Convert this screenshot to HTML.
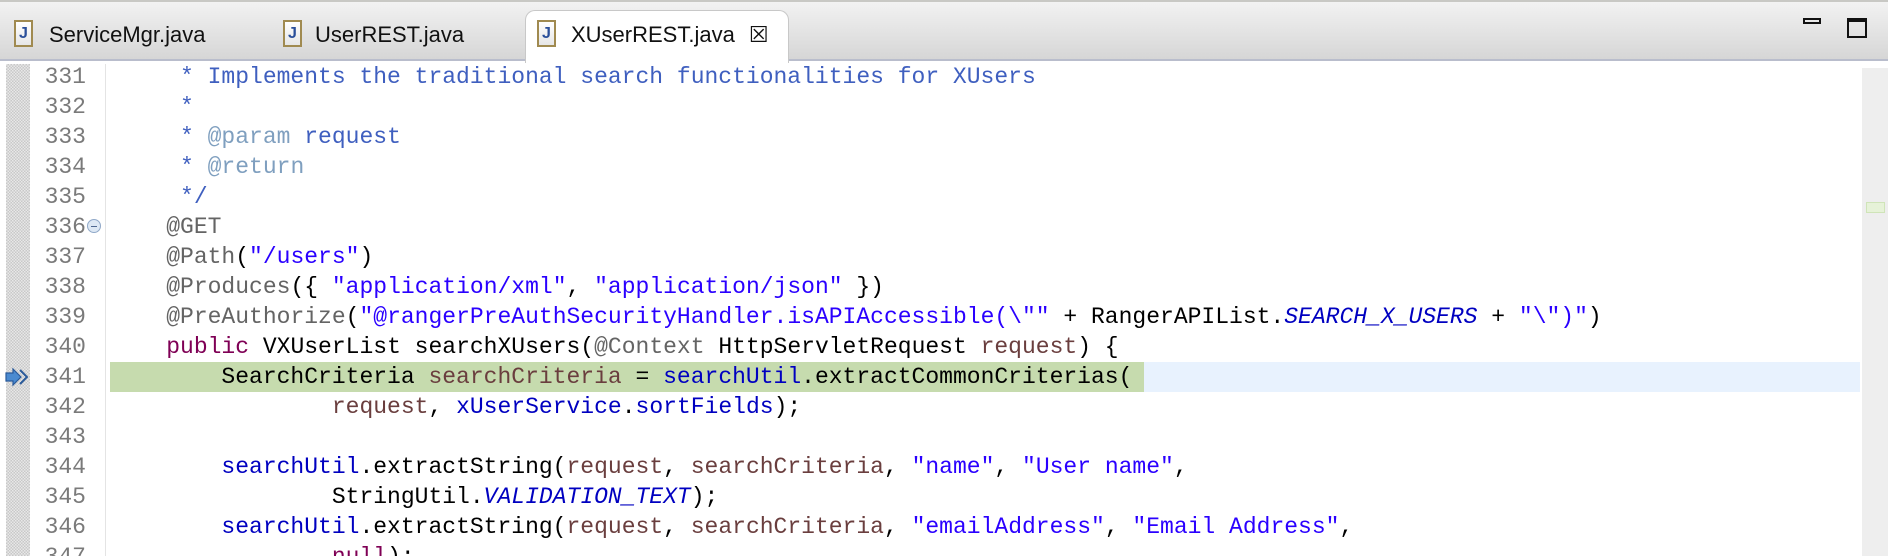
<!DOCTYPE html>
<html><head><meta charset="utf-8"><style>
html,body{margin:0;padding:0;background:#fff;width:1888px;height:556px;overflow:hidden;position:relative;font-family:"Liberation Sans",sans-serif}
.tabbar{position:absolute;left:0;top:0;width:1888px;height:61px;background:linear-gradient(#f2f2f2,#d6d6d6);border-top:2px solid #c8c8c4;box-sizing:border-box;border-bottom:2px solid #b9bdcc}
.tab{position:absolute;top:12px;height:49px;font-size:22px;color:#111;line-height:46px}
.tab .ic{position:absolute;left:0;top:8px;width:19px;height:27px;border:2px solid #a08a50;background:linear-gradient(#fff,#e6e6e6);box-sizing:border-box;font:bold 16px "Liberation Sans",sans-serif;color:#2a4f9a;text-align:center;line-height:23px}
.active{position:absolute;left:525px;top:10px;width:264px;height:53px;background:#fff;border:1px solid #c8c8c8;border-bottom:none;border-radius:10px 10px 0 0;box-sizing:border-box}
.code{position:absolute;left:0;top:62px;width:1888px}
.ln{position:absolute;left:0;width:86px;text-align:right;font:23px/30px "Liberation Mono",monospace;color:#7a7a7a}
.l{position:absolute;left:111px;white-space:pre;font:23px/30px "Liberation Mono",monospace;color:#000}
.c{color:#3F5FBF}.t{color:#7F9FBF}.a{color:#646464}.s{color:#2A00FF}.k{color:#7F0055}.f{color:#0000C0}.v{color:#6A3E3E}.i{color:#0000C0;font-style:italic}
</style></head><body>
<div class="tabbar"></div>
<div class="active"></div>
<div class="tab" style="left:14px"><span class="ic">J</span><span style="margin-left:35px">ServiceMgr.java</span></div>
<div class="tab" style="left:283px"><span class="ic">J</span><span style="margin-left:32px">UserREST.java</span></div>
<div class="tab" style="left:537px"><span class="ic">J</span><span style="margin-left:34px">XUserREST.java</span><span style="margin-left:14px;font-size:22px">&#x2612;</span></div>
<div style="position:absolute;left:1803px;top:18px;width:18px;height:6px;border:2px solid #111;box-sizing:border-box"></div>
<div style="position:absolute;left:1847px;top:18px;width:20px;height:20px;border:2px solid #111;border-top-width:4px;box-sizing:border-box"></div>
<div style="position:absolute;left:6px;top:64px;width:24px;height:492px;background:repeating-conic-gradient(#c8c8c8 0 25%,#e8e8e8 0 50%) 0 0/3px 3px"></div>
<div style="position:absolute;left:105px;top:64px;width:1px;height:492px;background:#e4e4e4"></div>
<div style="position:absolute;left:1862px;top:68px;width:26px;height:488px;background:#eeeeee"></div>
<div style="position:absolute;left:1866px;top:202px;width:17px;height:9px;background:#e6f2d8;border:1px solid #cfe4b8"></div>
<div style="position:absolute;left:110px;top:362px;width:1034px;height:30px;background:#c6dbae"></div>
<div style="position:absolute;left:1144px;top:362px;width:716px;height:30px;background:#e8f2fe"></div>
<div style="position:absolute;left:87px;top:219px;width:14px;height:14px;border:1px solid #90a8c8;border-radius:50%;background:#dde8f4;box-sizing:border-box"><div style="position:absolute;left:3px;top:5.5px;width:6px;height:1.5px;background:#506890"></div></div>
<svg style="position:absolute;left:4px;top:366px" width="24" height="22" viewBox="0 0 24 22"><path d="M2 7h7V3l8 8-8 8v-4H2z" fill="#4a8ad0" stroke="#2a5a9a" stroke-width="1.2"/><path d="M16 4l7 7-7 7" fill="none" stroke="#2a5a9a" stroke-width="2"/></svg>
<div class="code">
<div class="ln" style="top:0">331</div><div class="l c" style="top:0">     * Implements the traditional search functionalities for XUsers</div>
<div class="ln" style="top:30px">332</div><div class="l c" style="top:30px">     *</div>
<div class="ln" style="top:60px">333</div><div class="l c" style="top:60px">     * <span class="t">@param</span> request</div>
<div class="ln" style="top:90px">334</div><div class="l c" style="top:90px">     * <span class="t">@return</span></div>
<div class="ln" style="top:120px">335</div><div class="l c" style="top:120px">     */</div>
<div class="ln" style="top:150px">336</div><div class="l a" style="top:150px">    @GET</div>
<div class="ln" style="top:180px">337</div><div class="l" style="top:180px">    <span class="a">@Path</span>(<span class="s">"/users"</span>)</div>
<div class="ln" style="top:210px">338</div><div class="l" style="top:210px">    <span class="a">@Produces</span>({ <span class="s">"application/xml"</span>, <span class="s">"application/json"</span> })</div>
<div class="ln" style="top:240px">339</div><div class="l" style="top:240px">    <span class="a">@PreAuthorize</span>(<span class="s">"@rangerPreAuthSecurityHandler.isAPIAccessible(\""</span> + RangerAPIList.<span class="i">SEARCH_X_USERS</span> + <span class="s">"\")"</span>)</div>
<div class="ln" style="top:270px">340</div><div class="l" style="top:270px">    <span class="k">public</span> VXUserList searchXUsers(<span class="a">@Context</span> HttpServletRequest <span class="v">request</span>) {</div>
<div class="ln" style="top:300px">341</div><div class="l" style="top:300px">        SearchCriteria <span class="v">searchCriteria</span> = <span class="f">searchUtil</span>.extractCommonCriterias(</div>
<div class="ln" style="top:330px">342</div><div class="l" style="top:330px">                <span class="v">request</span>, <span class="f">xUserService</span>.<span class="f">sortFields</span>);</div>
<div class="ln" style="top:360px">343</div>
<div class="ln" style="top:390px">344</div><div class="l" style="top:390px">        <span class="f">searchUtil</span>.extractString(<span class="v">request</span>, <span class="v">searchCriteria</span>, <span class="s">"name"</span>, <span class="s">"User name"</span>,</div>
<div class="ln" style="top:420px">345</div><div class="l" style="top:420px">                StringUtil.<span class="i">VALIDATION_TEXT</span>);</div>
<div class="ln" style="top:450px">346</div><div class="l" style="top:450px">        <span class="f">searchUtil</span>.extractString(<span class="v">request</span>, <span class="v">searchCriteria</span>, <span class="s">"emailAddress"</span>, <span class="s">"Email Address"</span>,</div>
<div class="ln" style="top:480px">347</div><div class="l" style="top:480px">                <span class="k">null</span>);</div>
</div>
</body></html>
